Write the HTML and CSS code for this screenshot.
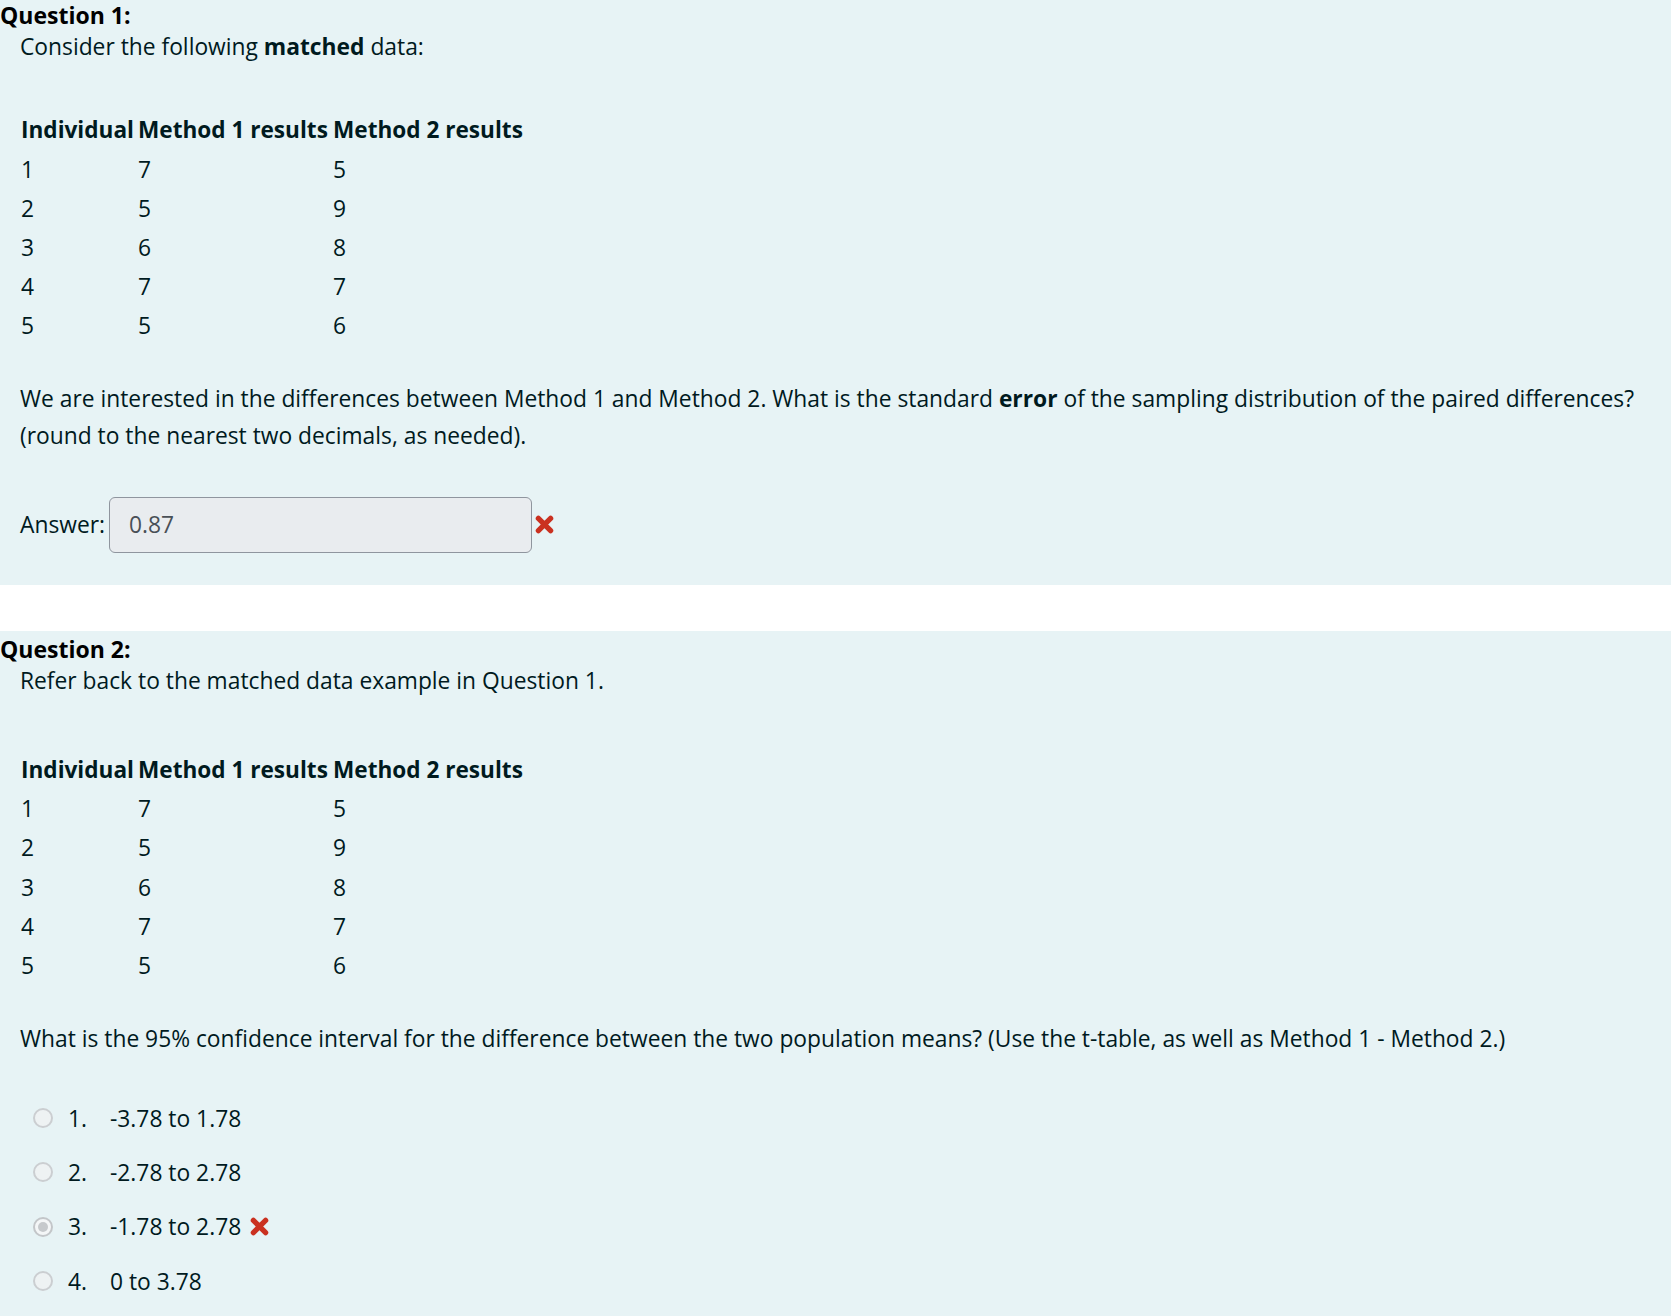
FILE: index.html
```html
<!DOCTYPE html>
<html lang="en">
<head>
<meta charset="utf-8">
<title>Quiz review</title>
<link rel="stylesheet" href="styles.css">
</head>
<body>
<section class="question q1">
  <h3 class="qno">Question 1:</h3>
  <p class="intro">Consider the following <strong>matched</strong> data:</p>
  <table class="data">
    <thead>
      <tr><th class="c1">Individual</th><th class="c2">Method 1 results</th><th class="c3">Method 2 results</th></tr>
    </thead>
    <tbody>
      <tr><td>1</td><td>7</td><td>5</td></tr>
      <tr><td>2</td><td>5</td><td>9</td></tr>
      <tr><td>3</td><td>6</td><td>8</td></tr>
      <tr><td>4</td><td>7</td><td>7</td></tr>
      <tr><td>5</td><td>5</td><td>6</td></tr>
    </tbody>
  </table>
  <p class="qtext">We are interested in the differences between Method 1 and Method 2. What is the standard <strong>error</strong> of the sampling distribution of the paired differences?<br>(round to the nearest two decimals, as needed).</p>
  <div class="answer">
    <label class="answer-label" for="ans1">Answer:</label>
    <input class="answer-box" id="ans1" type="text" value="0.87" readonly>
    <svg class="wrong" viewBox="0 0 18 18" aria-label="Incorrect"><path d="M3.2 3.2 L14.8 14.8 M14.8 3.2 L3.2 14.8"/></svg>
  </div>
</section>

<section class="question q2">
  <h3 class="qno">Question 2:</h3>
  <p class="intro">Refer back to the matched data example in Question 1.</p>
  <table class="data">
    <thead>
      <tr><th class="c1">Individual</th><th class="c2">Method 1 results</th><th class="c3">Method 2 results</th></tr>
    </thead>
    <tbody>
      <tr><td>1</td><td>7</td><td>5</td></tr>
      <tr><td>2</td><td>5</td><td>9</td></tr>
      <tr><td>3</td><td>6</td><td>8</td></tr>
      <tr><td>4</td><td>7</td><td>7</td></tr>
      <tr><td>5</td><td>5</td><td>6</td></tr>
    </tbody>
  </table>
  <p class="qtext">What is the 95% confidence interval for the difference between the two population means? (Use the t-table, as well as Method 1 - Method 2.)</p>
  <ul class="options">
    <li class="option"><span class="radio"></span><span class="num">1.</span><span class="otext">-3.78 to 1.78</span></li>
    <li class="option"><span class="radio"></span><span class="num">2.</span><span class="otext">-2.78 to 2.78</span></li>
    <li class="option"><span class="radio checked"></span><span class="num">3.</span><span class="otext">-1.78 to 2.78</span><svg class="wrong small" viewBox="0 0 18 18" aria-label="Incorrect"><path d="M3.2 3.2 L14.8 14.8 M14.8 3.2 L3.2 14.8"/></svg></li>
    <li class="option"><span class="radio"></span><span class="num">4.</span><span class="otext">0 to 3.78</span></li>
  </ul>
</section>
</body>
</html>
```

FILE: styles.css
```css
html, body {
  margin: 0;
  padding: 0;
  background: #ffffff;
}

body {
  font-family: "Open Sans", "Noto Sans", "Liberation Sans", sans-serif;
  font-size: 22.8px;
  color: #001a1e;
}

.question {
  background: #e7f3f5;
  overflow: hidden;
}

.q1 {
  height: 585px;
}

.q2 {
  margin-top: 46px;
  height: 685px;
}

.qno {
  margin: 0;
  padding-top: 0;
  font-size: 23px;
  line-height: 31px;
  font-weight: 700;
  color: #000;
}

.q2 .qno {
  padding-top: 3px;
}

.intro {
  margin: 0;
  padding-left: 20px;
  line-height: 31px;
}

.data {
  margin-left: 20px;
  margin-top: 48.4px;
  border-collapse: collapse;
  border-spacing: 0;
}

.q2 .data {
  margin-top: 53.9px;
}

.data th,
.data td {
  padding: 0 0 0 1px;
  text-align: left;
  line-height: 39.2px;
  height: 39.2px;
  white-space: nowrap;
  vertical-align: middle;
}

.data th {
  font-weight: 700;
  font-size: 22.6px;
}

.data .c1 { width: 116px; }
.data .c2 { width: 194px; }

.qtext {
  margin: 35.8px 0 0 0;
  padding-left: 20px;
  line-height: 36.3px;
  white-space: nowrap;
}

.answer {
  display: flex;
  align-items: center;
  margin-top: 42.5px;
  padding-left: 20px;
  height: 56.5px;
}

.answer-label {
  width: 89px;
}

.answer-box {
  box-sizing: border-box;
  width: 423px;
  height: 56.5px;
  margin: 0;
  padding: 0 19px;
  font: inherit;
  color: #495057;
  background: #e9ecef;
  border: 1px solid #8f959e;
  border-radius: 6px;
  outline: none;
}

.wrong {
  width: 19px;
  height: 19px;
  margin-left: 3px;
  flex: none;
}

.wrong path {
  fill: none;
  stroke: #ca3120;
  stroke-width: 5;
  stroke-linecap: round;
}

.options {
  list-style: none;
  margin: 33.8px 0 0 0;
  padding: 0 0 0 33px;
}

.option {
  display: flex;
  align-items: center;
  height: 54.3px;
}

.radio {
  box-sizing: border-box;
  width: 20px;
  height: 20px;
  border-radius: 50%;
  border: 2px solid #cbced1;
  background: #eef2f3;
  flex: none;
  display: flex;
  align-items: center;
  justify-content: center;
}

.radio.checked {
  border-color: #c3c6c9;
  background: #f4f6f7;
}

.radio.checked::after {
  content: "";
  width: 10px;
  height: 10px;
  border-radius: 50%;
  background: #c6c9cc;
}

.num {
  margin-left: 15px;
  width: 42px;
}

.otext {
  white-space: nowrap;
}

.wrong.small {
  margin-left: 9px;
}
```
